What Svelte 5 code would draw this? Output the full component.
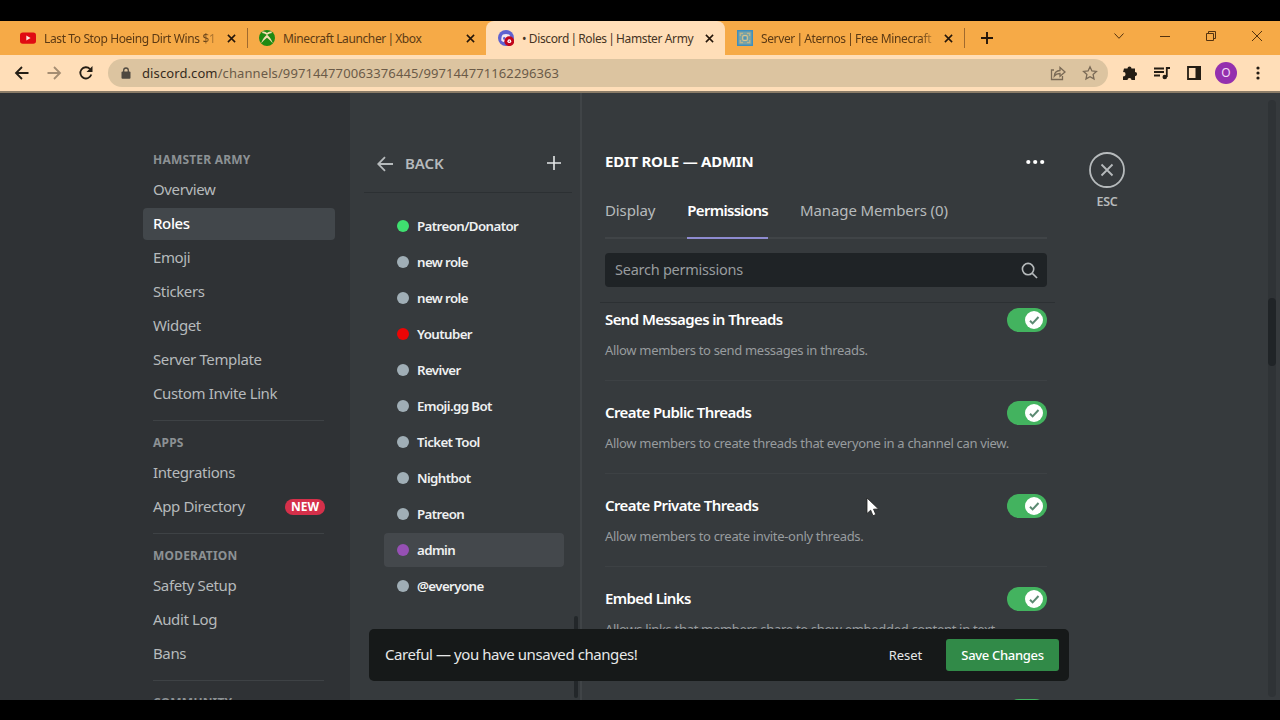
<script lang="ts">
	type Tab = { icon: string; title: string; active?: boolean; fade?: boolean };
	type Item = { label: string; selected?: boolean; badge?: string };
	type Section = { title: string; items: Item[] };

	const tabs: Tab[] = [
		{ icon: 'youtube', title: 'Last To Stop Hoeing Dirt Wins $1', fade: true },
		{ icon: 'xbox', title: 'Minecraft Launcher | Xbox' },
		{ icon: 'discord', title: '• Discord | Roles | Hamster Army', active: true },
		{ icon: 'aternos', title: 'Server | Aternos | Free Minecraft', fade: true }
	];

	const sections: Section[] = [
		{
			title: 'Hamster Army',
			items: [
				{ label: 'Overview' },
				{ label: 'Roles', selected: true },
				{ label: 'Emoji' },
				{ label: 'Stickers' },
				{ label: 'Widget' },
				{ label: 'Server Template' },
				{ label: 'Custom Invite Link' }
			]
		},
		{
			title: 'Apps',
			items: [{ label: 'Integrations' }, { label: 'App Directory', badge: 'New' }]
		},
		{
			title: 'Moderation',
			items: [{ label: 'Safety Setup' }, { label: 'Audit Log' }, { label: 'Bans' }]
		},
		{ title: 'Community', items: [] }
	];

	const grey = '#a0aeb6';
	const roles = [
		{ name: 'Patreon/Donator', color: '#3fe070' },
		{ name: 'new role', color: grey },
		{ name: 'new role', color: grey },
		{ name: 'Youtuber', color: '#ec0505' },
		{ name: 'Reviver', color: grey },
		{ name: 'Emoji.gg Bot', color: grey },
		{ name: 'Ticket Tool', color: grey },
		{ name: 'Nightbot', color: grey },
		{ name: 'Patreon', color: grey },
		{ name: 'admin', color: '#9650b4' },
		{ name: '@everyone', color: grey }
	];

	const roleTabs = ['Display', 'Permissions', 'Manage Members (0)'];

	let selectedRole = $state('admin');
	let selectedTab = $state('Permissions');
	let permissions = $state([
		{ name: 'Send Messages in Threads', text: 'Allow members to send messages in threads.', on: true },
		{
			name: 'Create Public Threads',
			text: 'Allow members to create threads that everyone in a channel can view.',
			on: true
		},
		{ name: 'Create Private Threads', text: 'Allow members to create invite-only threads.', on: true },
		{
			name: 'Embed Links',
			text: 'Allows links that members share to show embedded content in text channels.',
			on: true
		},
		{ name: 'Attach Files', text: 'Allows members to upload files or media in text channels.', on: true }
	]);
</script>

<div class="screen">
	<div class="window">
		<div class="tabStrip">
			{#each tabs as tab}
				<div class="tab" class:active={tab.active}>
					<svg class="favicon" viewBox="0 0 16 16">
						{#if tab.icon === 'youtube'}
							<rect x="0" y="2.4" width="16" height="11.4" rx="2.8" fill="#e00b12" />
							<path d="M6.3 5.6v4.9L10.6 8z" fill="#ffe6dc" />
						{:else if tab.icon === 'xbox'}
							<circle cx="8" cy="8" r="8" fill="#1f8a12" />
							<path d="M3 1.900C5 1 7 2.200 8 3c1-.8 3-2 5-1.100L12.300 3.200C10.500 3 9 4.200 8 5 7 4.200 5.500 3 3.700 3.200z" fill="#f6ddb0" />
							<path d="M2.300 13.600C2.600 10.500 5.500 6.800 8 4.800c2.500 2 5.400 5.700 5.700 8.800C12.600 11.500 10 9.200 8 7.800 6 9.200 3.400 11.500 2.300 13.600z" fill="#f6ddb0" />
						{:else if tab.icon === 'discord'}
							<circle cx="8" cy="8" r="8" fill="#5f62d0" />
							<path d="M3.200 10.600c0-3 .8-5.400 1.800-6 1.800-.8 4.200-.8 6 0 .8.600 1.500 2 1.700 4l-2.700 2.700-4.800.8z" fill="#f4e9f0" />
							<ellipse cx="6.200" cy="8.400" rx="1.200" ry="1.300" fill="#5f62d0" />
							<circle cx="11.300" cy="11.200" r="4.900" fill="#c0061c" />
							<circle cx="11.300" cy="11.200" r="1.900" fill="#fff" />
							<circle cx="11.300" cy="11.200" r=".6" fill="#c0061c" />
						{:else}
							<rect x=".75" y=".75" width="14.500" height="14.500" fill="#7aa3a6" stroke="#3f8fbd" stroke-width="1.500" />
							<path d="M3.300 6V3.300H6M10 3.300h2.700V6M12.700 10v2.700H10M6 12.700H3.300V10" fill="none" stroke="#bdb58c" stroke-width="1.200" />
							<rect x="5.700" y="5.700" width="4.600" height="4.600" rx="1" fill="#4f93b5" stroke="#d9c48c" stroke-width="1.200" />
						{/if}
					</svg>
					<span class="tabTitle" class:fade={tab.fade}>
						{#each tab.title.split(' | ') as part, i}{#if i > 0}<span class="pipe">&nbsp;|&nbsp;</span>{/if}{part}{/each}
					</span>
					<svg class="close" viewBox="0 0 10 10"><path d="M1 1l8 8M9 1l-8 8" /></svg>
				</div>
			{/each}
			<svg class="newTab" viewBox="0 0 12 12"><path d="M6 0v12M0 6h12" /></svg>
			<div class="windowControls">
				<svg viewBox="0 0 12 12"><path d="M1.500 3.500L6 8.300l4.500-4.800" /></svg>
				<svg viewBox="0 0 12 12"><path d="M1 6.500h10" /></svg>
				<svg viewBox="0 0 12 12"><path d="M1.500 3.500h7v7h-7zM3.500 3.500v-2h7v7h-2" /></svg>
				<svg viewBox="0 0 12 12"><path d="M1 1l10 10M11 1L1 11" /></svg>
			</div>
		</div>

		<div class="toolbar">
			<div class="navIcons">
				<svg viewBox="0 0 16 16"><path d="M14.500 8H2M8 2L2 8l6 6" /></svg>
				<svg class="dim" viewBox="0 0 16 16"><path d="M1.500 8H14M8 2l6 6-6 6" /></svg>
				<svg viewBox="0 0 16 16">
					<path d="M13.300 9.500A5.600 5.600 0 1 1 12 4" />
					<path class="solid" d="M14.500 1v6h-6z" />
				</svg>
			</div>
			<div class="omnibox">
				<svg class="lock" viewBox="0 0 10 12">
					<rect x=".5" y="4.500" width="9" height="7.300" rx="1" fill="#4f4940" />
					<path d="M2.700 5V3.300a2.300 2.300 0 0 1 4.600 0V5" fill="none" stroke="#4f4940" stroke-width="1.300" />
				</svg>
				<span class="url"><b>discord.com</b>/channels/997144770063376445/997144771162296363</span>
				<svg class="boxIcon" viewBox="0 0 16 16">
					<path d="M4 5H1.500v9.500h11V11" />
					<path d="M4.300 11c.3-3.500 2.200-5.300 5.700-5.500V2.500L15 7l-5 4.300V8.500c-2.600 0-4.300.7-5.700 2.500z" />
				</svg>
				<svg class="boxIcon" viewBox="0 0 16 16">
					<path d="M8 1.800l1.900 4.100 4.500.5-3.300 3 .9 4.500L8 11.700l-4 2.200.9-4.500-3.300-3 4.500-.5z" />
				</svg>
			</div>
			<div class="actions">
				<svg viewBox="0 0 16 16">
					<path class="solid" d="M2 3.500h3.500a2 2 0 1 1 4 0H13V7a2.100 2.100 0 1 1 0 4.200V15H9.500a2 2 0 1 0-4 0H1v-3.700a2.100 2.100 0 1 0 0-4.100z" />
				</svg>
				<svg viewBox="0 0 16 16">
					<path d="M0 3.500h10M0 7h10M0 10.500h6M12.800 12V3H16" />
					<circle class="solid" cx="10.800" cy="12" r="2.300" />
				</svg>
				<svg viewBox="0 0 16 16">
					<path d="M2 2h12v12H2z" />
					<path class="solid" d="M9.500 1H15v14H9.500z" />
				</svg>
				<span class="avatar">O</span>
				<svg viewBox="0 0 16 16">
					<circle class="solid" cx="8" cy="3" r="1.600" />
					<circle class="solid" cx="8" cy="8" r="1.600" />
					<circle class="solid" cx="8" cy="13" r="1.600" />
				</svg>
			</div>
		</div>

		<div class="settings">
			<nav class="sidebar">
				{#each sections as section}
					<section>
						<h4>{section.title}</h4>
						{#each section.items as item}
							<div class="item" class:selected={item.selected}>
								<span>{item.label}</span>
								{#if item.badge}<span class="badge">{item.badge}</span>{/if}
							</div>
						{/each}
					</section>
				{/each}
			</nav>

			<div class="roles">
				<div class="rolesHeader">
					<svg class="back" viewBox="0 0 16 16"><path d="M16 8H1.500M8 1.200L1.200 8 8 14.800" /></svg>
					<span>Back</span>
					<svg class="add" viewBox="0 0 14 14"><path d="M7 0v14M0 7h14" /></svg>
				</div>
				<div class="roleList">
					{#each roles as role}
						<button class="role" class:selected={role.name === selectedRole} onclick={() => (selectedRole = role.name)}>
							<i class="dot" style="background: {role.color}"></i>
							{role.name}
						</button>
					{/each}
				</div>
				<div class="rolesScroll"></div>
			</div>

			<main class="editor">
				<header>
					<h1>Edit role — admin</h1>
					<svg class="more" viewBox="0 0 20 6">
						<circle cx="3.300" cy="3" r="2.100" />
						<circle cx="10.200" cy="3" r="2.100" />
						<circle cx="17.200" cy="3" r="2.100" />
					</svg>
				</header>
				<div class="roleTabs">
					{#each roleTabs as tab}
						<button class:selectedTab={tab === selectedTab} onclick={() => (selectedTab = tab)}>{tab}</button>
					{/each}
				</div>
				<div class="search">
					<span>Search permissions</span>
					<svg viewBox="0 0 18 18"><circle cx="7.500" cy="7.500" r="6" /><path d="M12 12l5 5" /></svg>
				</div>
				<div class="permissions">
					{#each permissions as permission}
						<div class="permission">
							<div class="permissionTop">
								<h3>{permission.name}</h3>
								<button
									class="toggle"
									class:off={!permission.on}
									aria-label={permission.name}
									onclick={() => (permission.on = !permission.on)}
								>
									<svg viewBox="0 0 18 18"><circle cx="9" cy="9" r="9" /><path d="M5 9.800l2.600 2.600L13.500 6" /></svg>
								</button>
							</div>
							<p>{permission.text}</p>
						</div>
					{/each}
				</div>
			</main>

			<div class="esc">
				<svg viewBox="0 0 36 36"><circle cx="18" cy="18" r="17" /><path d="M12.500 12.500l11 11M23.500 12.500l-11 11" /></svg>
				<span>ESC</span>
			</div>

			<div class="pageScroll"><div class="thumb"></div></div>

			<div class="notice">
				<span>Careful — you have unsaved changes!</span>
				<button class="reset">Reset</button>
				<button class="save">Save Changes</button>
			</div>
		</div>
	</div>

	<svg class="cursor" viewBox="0 0 14 20">
		<path d="M1 1v15.500l3.700-3.300 2.300 5.500 2.800-1.200-2.300-5.300 5-.2z" fill="#fff" stroke="#222" stroke-width=".8" />
	</svg>
</div>

<style>
	:global(body) {
		background: #000;
	}

	.screen {
		position: relative;
		box-sizing: border-box;
		width: 1280px;
		height: 720px;
		padding: 21px 0 20px;
		overflow: hidden;
		background: #000;
		font-family: 'Noto Sans', 'Open Sans', sans-serif;
	}

	.screen :global(*) {
		box-sizing: border-box;
	}

	svg {
		display: block;
		flex: none;
	}

	button {
		border: none;
		padding: 0;
		background: none;
		font: inherit;
		color: inherit;
		letter-spacing: inherit;
		cursor: pointer;
	}

	h1,
	h3,
	h4,
	p {
		margin: 0;
	}

	.window {
		display: flex;
		flex-direction: column;
		height: 679px;
	}

	/* browser chrome */
	.tabStrip {
		display: flex;
		align-items: center;
		height: 34px;
		padding-left: 8px;
		background: #f6aa47;
	}

	.tab {
		position: relative;
		display: flex;
		align-items: center;
		width: 239px;
		height: 34px;
		padding: 0 10px 0 12px;
		font-size: 12px;
		letter-spacing: -0.38px;
		color: #5c3a14;
	}

	.tab:not(.active)::after {
		content: '';
		position: absolute;
		right: -1px;
		top: 7px;
		width: 1px;
		height: 20px;
		background: #a06a2e;
	}

	.tab:nth-child(2)::after {
		display: none;
	}

	.tab.active {
		border-radius: 8px 8px 0 0;
		background: #ffdeb8;
		color: #453423;
	}

	.favicon {
		width: 16px;
		height: 16px;
		margin-right: 8px;
	}

	.tabTitle {
		flex: 1;
		min-width: 0;
		margin-right: 9px;
		overflow: hidden;
		white-space: nowrap;
	}

	.tabTitle.fade {
		margin-right: 6px;
		mask-image: linear-gradient(to right, #000 90%, transparent);
	}

	.pipe {
		margin: 0 -1.2px;
	}

	.close {
		width: 9px;
		height: 9px;
		margin-right: 1px;
		fill: none;
		stroke: #24160a;
		stroke-width: 1.7;
	}

	.newTab {
		width: 12px;
		height: 12px;
		margin-left: 17px;
		fill: none;
		stroke: #24160a;
		stroke-width: 1.9;
	}

	.windowControls {
		display: flex;
		gap: 34px;
		margin: -4px 17px 0 auto;
	}

	.windowControls svg {
		width: 12px;
		height: 12px;
		fill: none;
		stroke: #54330f;
	}

	.toolbar {
		display: flex;
		align-items: center;
		height: 38px;
		padding: 0 14px;
		border-bottom: 2px solid #8b7c68;
		background: #ffdeb8;
	}

	.navIcons,
	.actions {
		display: flex;
		align-items: center;
		gap: 16px;
	}

	.navIcons svg,
	.actions svg {
		width: 16px;
		height: 16px;
		fill: none;
		stroke: #241d14;
		stroke-width: 1.8;
	}

	.navIcons svg.dim {
		stroke: #a58d72;
	}

	.navIcons .solid,
	.actions .solid {
		fill: #241d14;
		stroke: none;
	}

	.omnibox {
		display: flex;
		align-items: center;
		width: 1000px;
		height: 28px;
		margin: 0 14px;
		padding: 0 10px 0 13px;
		border-radius: 14px;
		background: #dcc4a0;
	}

	.lock {
		width: 10px;
		height: 12px;
		margin-right: 11px;
	}

	.url {
		flex: 1;
		font-size: 13px;
		letter-spacing: 0.1px;
		color: #6b5b48;
	}

	.url b {
		font-weight: 400;
		color: #362b1d;
	}

	.boxIcon {
		width: 16px;
		height: 16px;
		margin-left: 16px;
		fill: none;
		stroke: #7a6a56;
		stroke-width: 1.3;
	}

	.avatar {
		width: 22px;
		height: 22px;
		margin: 0 -3px;
		border-radius: 50%;
		background: #9430ae;
		color: #f3dcf5;
		font-size: 12px;
		line-height: 22px;
		text-align: center;
	}

	/* settings */
	.settings {
		position: relative;
		display: flex;
		flex: 1;
		min-height: 0;
		overflow: hidden;
		background: #363a3d;
		color: #b6babc;
		font-size: 15px;
	}

	.sidebar {
		width: 350px;
		padding: 53px 15px 0 143px;
		background: #2f3235;
	}

	section + section::before {
		content: '';
		display: block;
		height: 1px;
		margin: 10px 11px 8px 10px;
		background: #3e4245;
	}

	h4 {
		height: 28px;
		padding-left: 10px;
		font-size: 12px;
		font-weight: 700;
		line-height: 27px;
		letter-spacing: 0.2px;
		text-transform: uppercase;
		color: #8c9194;
	}

	.item {
		display: flex;
		align-items: center;
		justify-content: space-between;
		height: 32px;
		margin-bottom: 2px;
		padding: 0 10px;
		border-radius: 4px;
		line-height: 20px;
		letter-spacing: -0.38px;
	}

	.item span:first-child {
		margin-top: -2px;
	}

	.item.selected {
		background: #42474b;
		color: #fff;
		font-weight: 500;
	}

	.badge {
		width: 40px;
		border-radius: 8px;
		background: #d5304a;
		color: #fff;
		font-size: 12px;
		font-weight: 700;
		line-height: 16px;
		letter-spacing: 0;
		text-align: center;
		text-transform: uppercase;
	}

	.roles {
		position: relative;
		width: 232px;
		border-right: 2px solid #404447;
	}

	.rolesHeader {
		display: flex;
		align-items: center;
		height: 100px;
		margin: 0 8px 0 14px;
		padding: 42px 11px 0 13px;
		border-bottom: 1px solid #2c3033;
		font-weight: 600;
		text-transform: uppercase;
		letter-spacing: -0.1px;
	}

	.rolesHeader span {
		margin: -2px auto 0 12px;
	}

	.back {
		width: 16px;
		height: 16px;
		fill: none;
		stroke: #b6babc;
		stroke-width: 1.8;
	}

	.add {
		width: 14px;
		height: 14px;
		margin-top: -2px;
		fill: none;
		stroke: #e4e6e7;
		stroke-width: 1.6;
	}

	.roleList {
		display: flex;
		flex-direction: column;
		gap: 2px;
		padding: 16px 16px 0 34px;
	}

	.role {
		display: flex;
		align-items: center;
		gap: 8px;
		height: 34px;
		padding-left: 13px;
		border-radius: 4px;
		font-size: 13.3px;
		font-weight: 600;
		letter-spacing: -0.6px;
		color: #eef0f1;
	}

	.role.selected {
		background: #44484c;
	}

	.dot {
		width: 12px;
		height: 12px;
		border-radius: 50%;
	}

	.rolesScroll {
		position: absolute;
		right: 2px;
		top: 523px;
		width: 4px;
		height: 82px;
		border-radius: 2px;
		background: #23272a;
	}

	.editor {
		display: flex;
		flex-direction: column;
		width: 473px;
		padding-top: 58px;
	}

	header {
		display: flex;
		align-items: center;
		justify-content: space-between;
		height: 22px;
		padding: 0 10px 0 23px;
	}

	h1 {
		margin-top: -2px;
		font-size: 15px;
		font-weight: 700;
		letter-spacing: -0.25px;
		text-transform: uppercase;
		color: #fff;
	}

	.more {
		width: 20px;
		height: 6px;
		fill: #fff;
	}

	.roleTabs {
		display: flex;
		gap: 32px;
		height: 57px;
		margin: 9px 8px 0 23px;
		border-bottom: 2px solid #404447;
	}

	.roleTabs button {
		height: 57px;
		padding-top: 1px;
		border-bottom: 2px solid transparent;
		letter-spacing: -0.12px;
	}

	.roleTabs .selectedTab {
		border-color: #8e8bd0;
		color: #fff;
		font-weight: 600;
		letter-spacing: -0.7px;
	}

	.search {
		display: flex;
		align-items: center;
		justify-content: space-between;
		height: 34px;
		margin: 14px 8px 0 23px;
		padding: 0 9px 0 10px;
		border-radius: 4px;
		background: #1f2326;
		color: #989c9f;
		font-size: 14.5px;
		letter-spacing: -0.25px;
	}

	.search span {
		margin-top: -2px;
	}

	.search svg {
		width: 17px;
		height: 17px;
		fill: none;
		stroke: #b6babc;
		stroke-width: 1.7;
	}

	.permissions {
		flex: 1;
		min-height: 0;
		margin: 15px 0 0 18px;
		padding: 5px 8px 0 5px;
		overflow: hidden;
		border-top: 1px solid #2c3033;
	}

	.permission {
		margin-bottom: 20px;
		padding-bottom: 20px;
		border-bottom: 1px solid #3d4144;
	}

	.permissionTop {
		display: flex;
		align-items: center;
		justify-content: space-between;
		height: 24px;
	}

	h3 {
		margin-top: -2px;
		font-size: 15px;
		font-weight: 600;
		letter-spacing: -0.6px;
		color: #fff;
	}

	p {
		margin: 9px 30px 0 0;
		font-size: 13px;
		line-height: 19px;
		letter-spacing: -0.32px;
		color: #989c9f;
	}

	.toggle {
		display: flex;
		align-items: center;
		justify-content: flex-end;
		width: 40px;
		height: 24px;
		padding: 0 4px;
		border-radius: 12px;
		background: #43b35f;
	}

	.toggle.off {
		justify-content: flex-start;
		background: #72767d;
	}

	.toggle svg {
		width: 18px;
		height: 18px;
		fill: #fff;
	}

	.toggle path {
		fill: none;
		stroke: #5b8a72;
		stroke-width: 2;
	}

	.esc {
		display: flex;
		flex-direction: column;
		align-items: center;
		gap: 5px;
		margin: 59px 0 0 34px;
		font-size: 12.5px;
		font-weight: 600;
		line-height: 18px;
		letter-spacing: -0.2px;
	}

	.esc svg {
		width: 36px;
		height: 36px;
		fill: none;
		stroke: #b6babc;
		stroke-width: 1.8;
	}

	.pageScroll {
		width: 8px;
		height: 597px;
		margin: 7px 4px 0 auto;
		padding-top: 198px;
		border-radius: 4px;
		background: #2f3336;
	}

	.thumb {
		height: 68px;
		border-radius: 4px;
		background: #202427;
	}

	.notice {
		position: absolute;
		left: 369px;
		top: 536px;
		display: flex;
		align-items: center;
		width: 700px;
		height: 52px;
		padding: 0 10px 0 16px;
		border-radius: 5px;
		background: #161919;
		color: #e6e8e8;
		letter-spacing: -0.43px;
	}

	.notice span {
		margin-top: -2px;
	}

	.reset {
		margin: -1px 24px 0 auto;
		font-size: 13px;
		letter-spacing: -0.1px;
	}

	.save {
		width: 113px;
		height: 32px;
		padding-bottom: 1px;
		border-radius: 3px;
		background: #318a48;
		color: #fff;
		font-size: 13px;
		font-weight: 500;
		letter-spacing: -0.32px;
	}

	.cursor {
		position: absolute;
		left: 866px;
		top: 497px;
		width: 14px;
		height: 20px;
	}
</style>
